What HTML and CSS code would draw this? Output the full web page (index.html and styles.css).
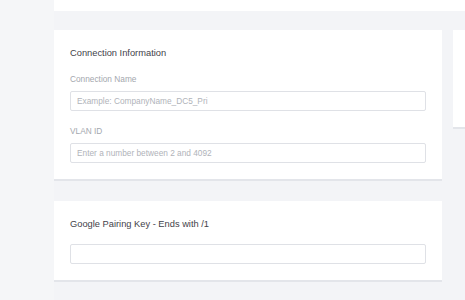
FILE: index.html
```html
<!DOCTYPE html>
<html>
<head>
<meta charset="utf-8">
<link rel="stylesheet" href="styles.css">
</head>
<body>
<div class="page">
  <div class="rail"></div>
  <main class="main">
    <div class="card top-card"></div>
    <div class="row">
      <section class="card form-card">
        <h2 class="heading">Connection Information</h2>
        <label class="label">Connection Name</label>
        <input class="input" type="text" placeholder="Example: CompanyName_DC5_Pri">
        <label class="label">VLAN ID</label>
        <input class="input input-vlan" type="text" placeholder="Enter a number between 2 and 4092">
      </section>
      <aside class="card side-card"></aside>
    </div>
    <section class="card form-card key-card">
      <h2 class="heading">Google Pairing Key - Ends with /1</h2>
      <input class="input input-key" type="text">
    </section>
  </main>
</div>
</body>
</html>
```
FILE: styles.css
```css
html, body {
  margin: 0;
  padding: 0;
}
body {
  background: #f3f4f7;
  font-family: "Liberation Sans", Arial, sans-serif;
  width: 465px;
  height: 300px;
  overflow: hidden;
}
.page {
  display: flex;
  height: 300px;
  overflow: hidden;
}
.rail {
  width: 54px;
  flex: 0 0 54px;
  background: #f5f6f8;
}
.main {
  flex: 1;
  display: flex;
  flex-direction: column;
  align-items: flex-start;
  min-width: 0;
  overflow: hidden;
}
.main > * {
  flex-shrink: 0;
}
.card {
  background: #ffffff;
  box-shadow: 0 2px 0 #e3e5ea;
}
.top-card {
  height: 11px;
  width: 411px;
  box-shadow: none;
  margin-bottom: 19px;
}
.row {
  display: flex;
  gap: 11px;
  align-items: flex-start;
  width: 411px;
}
.form-card {
  width: 388px;
  flex-shrink: 0;
  box-sizing: border-box;
  padding: 17px 16px 16px;
  display: flex;
  flex-direction: column;
}
.side-card {
  flex: 1 0 12px;
  height: 97px;
}
.heading {
  margin: 0;
  font-size: 9.3px;
  line-height: 12px;
  font-weight: 400;
  color: #3f4249;
}
.label {
  display: block;
  margin-top: 14.5px;
  font-size: 8.3px;
  line-height: 11px;
  color: #a4a7ae;
}
.input {
  margin: 6.5px 0 0;
  box-sizing: border-box;
  height: 20px;
  width: 100%;
  border: 1px solid #dfe1e6;
  border-radius: 2px;
  padding: 0 6px;
  font-family: "Liberation Sans", Arial, sans-serif;
  font-size: 8.3px;
  color: #555;
  background: #fff;
  outline: none;
}
.input-vlan {
  margin-top: 6px;
}
.input::placeholder {
  color: #b0b3b9;
}
.key-card {
  margin-top: 22px;
  padding-top: 17px;
}
.input-key {
  margin-top: 14px;
}
```
